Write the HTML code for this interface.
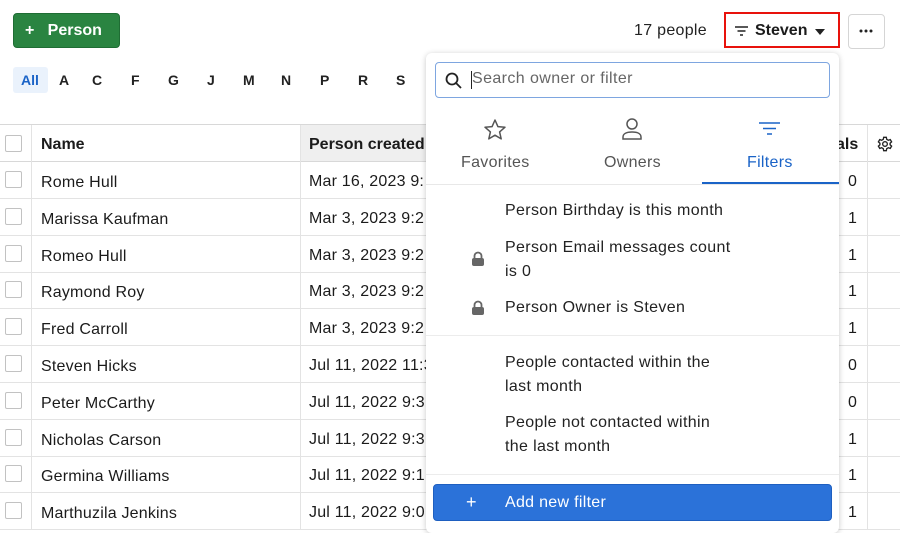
<!DOCTYPE html>
<html><head><style>
*{box-sizing:border-box;margin:0;padding:0}
body{width:900px;height:529px;overflow:hidden;background:#fff;font-family:"Liberation Sans",sans-serif;color:#1b1b1b;position:relative;font-size:15px}
.abs{position:absolute}
.btn{left:13px;top:13px;width:107px;height:35px;background:#2a8441;border:1px solid #1f6d34;border-radius:4px;color:#fff;font-weight:bold;font-size:16px;line-height:33px;padding-left:11px}
.letters span{position:absolute;top:72px;font-size:14px;font-weight:bold;color:#222}
.hline{position:absolute;left:0;width:900px;height:1px;background:#e3e3e3}
.vline{position:absolute;width:1px;background:#e3e3e3}
.cb{position:absolute;left:5px;width:17px;height:17px;border:1.5px solid #c2c2c2;border-radius:2px;background:#fff}
.cell{position:absolute;font-size:16px;color:#1b1b1b;letter-spacing:0.2px}
.dd{left:426px;top:53px;width:413px;height:480px;background:#fff;border-radius:6px;box-shadow:0 1px 6px rgba(0,0,0,.22)}
.item{position:absolute;left:79px;font-size:16px;color:#222;line-height:24px;letter-spacing:0.35px}
</style></head><body>
<div class="abs btn">+&nbsp;&nbsp; Person</div>
<div class="abs" style="left:634px;top:22px;font-size:16px;color:#222;letter-spacing:0.3px">17 people</div>
<div class="abs" style="left:724px;top:12px;width:116px;height:36px;border:2px solid #e8120c"></div>
<svg class="abs" style="left:735px;top:26px" width="14" height="10"><path d="M0 1h13M2.5 5h8M5 9h3" stroke="#222" stroke-width="1.5"/></svg>
<div class="abs" style="left:755px;top:22px;font-size:16px;font-weight:bold;color:#1b1b1b">Steven</div>
<svg class="abs" style="left:815px;top:29px" width="10" height="6"><path d="M0 0h10L5 6z" fill="#222"/></svg>
<div class="abs" style="left:848px;top:14px;width:37px;height:35px;border:1px solid #d5d5d5;border-radius:4px"></div>
<svg class="abs" style="left:859px;top:29px" width="14" height="4"><circle cx="2" cy="2" r="1.5" fill="#222"/><circle cx="7" cy="2" r="1.5" fill="#222"/><circle cx="12" cy="2" r="1.5" fill="#222"/></svg>
<div class="abs" style="left:13px;top:67px;width:35px;height:26px;background:#eaf2fc;border-radius:3px"></div>
<div class="letters"><span style="left:21px;color:#1a63c7">All</span><span style="left:59px">A</span><span style="left:92px">C</span><span style="left:131px">F</span><span style="left:168px">G</span><span style="left:207px">J</span><span style="left:243px">M</span><span style="left:281px">N</span><span style="left:320px">P</span><span style="left:358px">R</span><span style="left:396px">S</span></div>

<div class="abs" style="left:300px;top:125px;width:130px;height:37px;background:#efefef"></div>
<div class="hline" style="top:124px;background:#d8d8d8"></div>
<div class="hline" style="top:161px;background:#d8d8d8"></div>
<div class="vline" style="left:31px;top:125px;height:404px"></div>
<div class="vline" style="left:300px;top:125px;height:404px"></div>
<div class="vline" style="left:867px;top:125px;height:404px"></div>
<div class="cb" style="top:135px"></div>
<div class="cell" style="left:41px;top:136px;font-weight:bold;letter-spacing:0">Name</div>
<div class="cell" style="left:309px;top:136px;font-weight:bold;letter-spacing:0">Person created</div>
<div class="cell" style="left:836px;top:136px;font-weight:bold;letter-spacing:0">als</div>
<svg class="abs" style="left:877px;top:136px" width="16" height="16" viewBox="0 0 24 24"><path fill="none" stroke="#222" stroke-width="2" d="M10 2h4l.6 3 2.4 1.4 2.9-1 2 3.4-2.3 2a7 7 0 010 2.4l2.3 2-2 3.4-2.9-1L14.6 19 14 22h-4l-.6-3L7 17.6l-2.9 1-2-3.4 2.3-2a7 7 0 010-2.4l-2.3-2 2-3.4 2.9 1L9.4 5z"/><circle cx="12" cy="12" r="3.5" fill="none" stroke="#222" stroke-width="2"/></svg>

<div id="rows"></div>
<script>
var names=["Rome Hull","Marissa Kaufman","Romeo Hull","Raymond Roy","Fred Carroll","Steven Hicks","Peter McCarthy","Nicholas Carson","Germina Williams","Marthuzila Jenkins"];
var dates=["Mar 16, 2023 9:","Mar 3, 2023 9:2","Mar 3, 2023 9:2","Mar 3, 2023 9:2","Mar 3, 2023 9:2","Jul 11, 2022 11:3","Jul 11, 2022 9:3","Jul 11, 2022 9:3","Jul 11, 2022 9:1","Jul 11, 2022 9:0"];
var nums=["0","1","1","1","1","0","0","1","1","1"];
var h="";
for(var i=0;i<10;i++){var t=162+i*36.8;
h+='<div class="cb" style="top:'+(t+9)+'px"></div><div class="cell" style="left:41px;top:'+(t+12)+'px">'+names[i]+'</div><div class="cell" style="left:309px;top:'+(t+11)+'px">'+dates[i]+'</div><div class="cell" style="left:848px;top:'+(t+11)+'px">'+nums[i]+'</div><div class="hline" style="top:'+(t+36)+'px"></div>';}
document.getElementById('rows').innerHTML=h;
</script>

<div class="abs dd">
<div class="abs" style="left:9px;top:9px;width:395px;height:36px;border:1px solid #7ea6e0;border-radius:4px"></div>
<svg class="abs" style="left:19px;top:19px" width="17" height="17"><circle cx="7" cy="7" r="5.5" fill="none" stroke="#222" stroke-width="1.8"/><path d="M11 11l5 5" stroke="#222" stroke-width="1.8"/></svg>
<div class="abs" style="left:45px;top:18px;width:1px;height:18px;background:#222"></div>
<div class="abs" style="left:46px;top:17px;font-size:16px;color:#666;letter-spacing:0.4px">Search owner or filter</div>
<svg class="abs" style="left:57px;top:65px" width="24" height="24" viewBox="0 0 24 24"><path d="M12 2l2.9 6.6 7.1.6-5.4 4.7 1.6 7L12 17.2 5.8 20.9l1.6-7L2 9.2l7.1-.6z" fill="none" stroke="#555" stroke-width="1.5" stroke-linejoin="round"/></svg>
<div class="abs" style="left:35px;top:101px;font-size:16px;color:#555;letter-spacing:0.3px">Favorites</div>
<svg class="abs" style="left:195px;top:64px" width="22" height="24" viewBox="0 0 22 24"><circle cx="11" cy="7" r="5" fill="none" stroke="#555" stroke-width="1.5"/><path d="M2 22v-2c0-3 3-5 9-5s9 2 9 5v2z" fill="none" stroke="#555" stroke-width="1.5"/></svg>
<div class="abs" style="left:178px;top:101px;font-size:16px;color:#555;letter-spacing:0.3px">Owners</div>
<svg class="abs" style="left:333px;top:69px" width="22" height="14"><path d="M0 1h21M4 6.5h13M8 12h5" stroke="#1a63c7" stroke-width="1.6"/></svg>
<div class="abs" style="left:321px;top:101px;font-size:16px;color:#1a63c7;letter-spacing:0.3px">Filters</div>
<div class="abs" style="left:0;top:131px;width:413px;height:1px;background:#e8e8e8"></div>
<div class="abs" style="left:276px;top:129px;width:137px;height:2px;background:#1a63c7"></div>
<div class="item" style="top:146px">Person Birthday is this month</div>
<div class="item" style="top:183px">Person Email messages count<br>is 0</div>
<svg class="abs" style="left:45px;top:198px" width="14" height="16"><path d="M3.5 7V5a3.5 3.5 0 017 0v2" fill="none" stroke="#666" stroke-width="1.8"/><rect x="1" y="7" width="12" height="8" rx="2" fill="#666"/></svg>
<div class="item" style="top:243px">Person Owner is Steven</div>
<svg class="abs" style="left:45px;top:247px" width="14" height="16"><path d="M3.5 7V5a3.5 3.5 0 017 0v2" fill="none" stroke="#666" stroke-width="1.8"/><rect x="1" y="7" width="12" height="8" rx="2" fill="#666"/></svg>
<div class="abs" style="left:0;top:282px;width:413px;height:1px;background:#ececec"></div>
<div class="item" style="top:298px">People contacted within the<br>last month</div>
<div class="item" style="top:358px">People not contacted within<br>the last month</div>
<div class="abs" style="left:0;top:421px;width:413px;height:1px;background:#ececec"></div>
<div class="abs" style="left:7px;top:431px;width:399px;height:37px;background:#2b72d9;border:1px solid #1e5fc0;border-radius:4px;color:#fff;font-size:16px;line-height:35px;letter-spacing:0.3px"><span style="position:absolute;left:32px;font-size:18px">+</span><span style="position:absolute;left:71px">Add new filter</span></div>
</div>
</body></html>
